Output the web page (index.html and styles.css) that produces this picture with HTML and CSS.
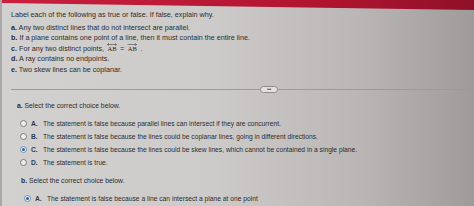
FILE: index.html
```html
<!DOCTYPE html>
<html lang="en">
<head>
  <meta charset="UTF-8">
  <title>True or False</title>
  <link rel="stylesheet" href="styles.css">
</head>
<body>
  <div class="topbar"></div>

  <div class="page">
    <!-- question -->
    <div class="question">
      <p class="prompt">Label each of the following as true or false. If false, explain why.</p>
      <ul class="items">
        <li><b>a.</b> Any two distinct lines that do not intersect are parallel.</li>
        <li><b>b.</b> If a plane contains one point of a line, then it must contain the entire line.</li>
        <li class="item-c"><b>c.</b> For any two distinct points,
          <span class="vec"><svg width="10" height="3" viewBox="0 0 10 3"><path d="M0.5 1.5H9.5M0.5 1.5L2 0.3M0.5 1.5L2 2.7M9.5 1.5L8 0.3M9.5 1.5L8 2.7" stroke="#444" stroke-width="0.6" fill="none"/></svg>AB</span>
          =
          <span class="vec"><svg width="10" height="3" viewBox="0 0 10 3"><path d="M0.5 1.5H9.5M9.5 1.5L8 0.3M9.5 1.5L8 2.7" stroke="#444" stroke-width="0.6" fill="none"/></svg>AB</span> .</li>
        <li><b>d.</b> A ray contains no endpoints.</li>
        <li><b>e.</b> Two skew lines can be coplanar.</li>
      </ul>
    </div>

    <div class="divider">
      <span class="more">&bull;&bull;&bull;</span>
    </div>

    <!-- part a -->
    <div class="part">
      <p class="label"><b>a.</b> Select the correct choice below.</p>
      <ul class="choices">
        <li><span class="radio"></span><b class="letter">A.</b> The statement is false because parallel lines can intersect if they are concurrent.</li>
        <li><span class="radio"></span><b class="letter">B.</b> The statement is false because the lines could be coplanar lines, going in different directions.</li>
        <li><span class="radio checked"></span><b class="letter">C.</b> The statement is false because the lines could be skew lines, which cannot be contained in a single plane.</li>
        <li><span class="radio"></span><b class="letter">D.</b> The statement is true.</li>
      </ul>
    </div>

    <!-- part b -->
    <div class="part part-b">
      <p class="label"><b>b.</b> Select the correct choice below.</p>
      <ul class="choices">
        <li><span class="radio checked"></span><b class="letter">A.</b> The statement is false because a line can intersect a plane at one point</li>
      </ul>
    </div>
  </div>
</body>
</html>
```

FILE: styles.css
```css
html, body {
  margin: 0;
  height: 100%;
  overflow: hidden;
}

body {
  font-family: "Liberation Sans", Arial, sans-serif;
  font-size: 7.2px;
  color: #2c2c2c;
  background: linear-gradient(to right, #d3d1d0 0%, #cdcbca 45%, #bab7b6 75%, #9f9b9a 100%);
  border-left: 2px solid #a9a7a7;
  box-sizing: border-box;
}

.topbar {
  height: 10px;
  background: linear-gradient(to right, #c8203e, #b0142f 70%, #8e1028);
  clip-path: polygon(0 0, 100% 0, 100% 100%, 0 30%);
}

.page {
  padding-left: 9px;
}

p {
  margin: 0;
}

ul {
  list-style: none;
  margin: 0;
  padding: 0;
}

.prompt {
  line-height: 10px;
}

.items {
  margin-top: 3px;
}

.items li {
  line-height: 10px;
  height: 10px;
  white-space: nowrap;
}

.items li.item-c {
  height: 11px;
  line-height: 12px;
}

.items li:nth-child(4) {
  height: 11px;
}

.vec {
  display: inline-block;
  text-align: center;
  font-family: "Liberation Serif", "Times New Roman", serif;
  font-size: 6.6px;
  line-height: 6px;
  margin: 0 1px;
}

.vec svg {
  display: block;
  margin: 0 auto;
}

.divider {
  position: relative;
  margin-top: 14px;
  height: 1px;
  background: #9d9b9a;
}

.more {
  position: absolute;
  left: 249px;
  top: -3px;
  width: 16px;
  height: 5px;
  border: 1px solid #8d8b8a;
  border-radius: 4px;
  background: #e4e2e1;
  font-size: 5px;
  line-height: 5px;
  letter-spacing: -0.5px;
  text-align: center;
  color: #555;
}

.part {
  padding-left: 6px;
  margin-top: 11px;
}

.part .label {
  line-height: 10px;
  font-size: 6.8px;
}

.choices {
  margin-top: 6px;
  padding-left: 3px;
  font-size: 6.7px;
}

.choices li {
  display: flex;
  align-items: center;
  height: 13px;
  white-space: nowrap;
}

.radio {
  width: 5px;
  height: 5px;
  border: 1px solid #7c7b7b;
  border-radius: 50%;
  background: #eeeeee;
  margin-right: 4px;
  flex-shrink: 0;
  display: flex;
  align-items: center;
  justify-content: center;
}

.radio.checked {
  border-color: #6d8fb8;
}

.radio.checked::after {
  content: "";
  width: 3px;
  height: 3px;
  border-radius: 50%;
  background: #2d5f9e;
}

.letter {
  width: 12px;
  color: #2c3a4c;
}

.part-b {
  margin-top: 7px;
  padding-left: 10px;
}
```
